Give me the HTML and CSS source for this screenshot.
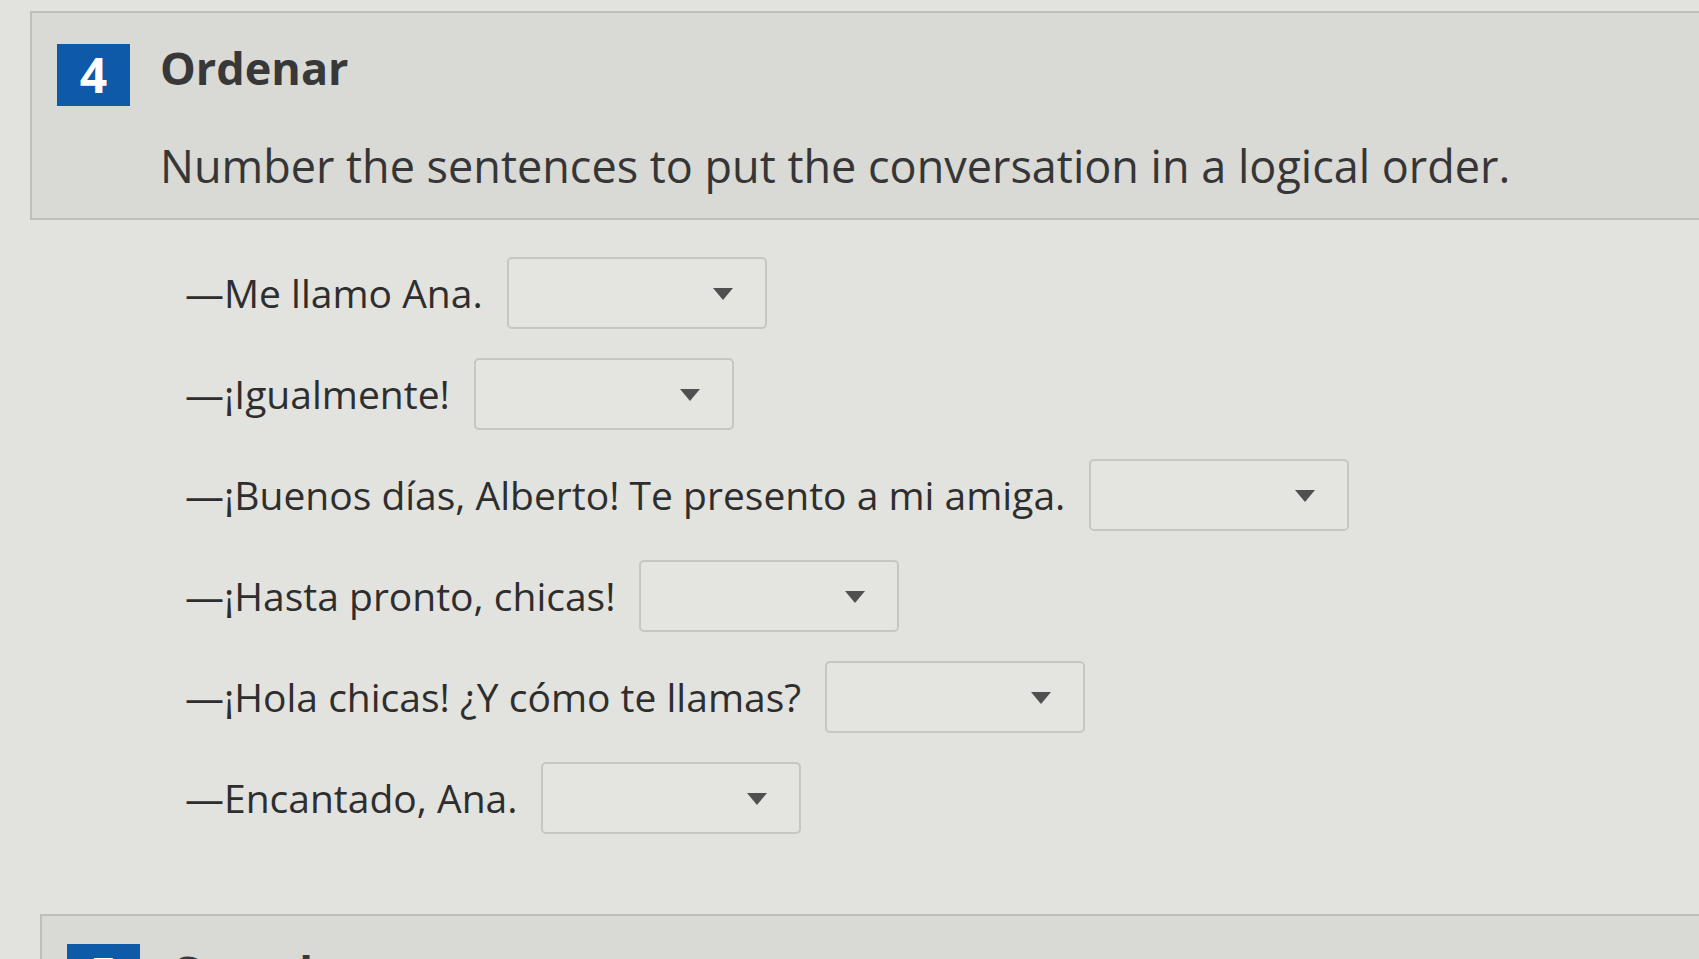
FILE: index.html
```html
<!DOCTYPE html>
<html lang="es">
<head>
<meta charset="utf-8">
<title>Ordenar</title>
<link rel="stylesheet" href="styles.css">
</head>
<body>
<div class="page">
  <section class="activity">
    <header class="activity-head">
      <div class="badge">4</div>
      <div class="head-text">
        <h1 class="title">Ordenar</h1>
        <p class="instructions">Number the sentences to put the conversation in a logical order.</p>
      </div>
    </header>
    <div class="items">
      <div class="row"><span class="line">—Me llamo Ana.</span><div class="select"><span class="caret"></span></div></div>
      <div class="row"><span class="line">—¡Igualmente!</span><div class="select"><span class="caret"></span></div></div>
      <div class="row"><span class="line">—¡Buenos días, Alberto! Te presento a mi amiga.</span><div class="select"><span class="caret"></span></div></div>
      <div class="row"><span class="line">—¡Hasta pronto, chicas!</span><div class="select"><span class="caret"></span></div></div>
      <div class="row"><span class="line">—¡Hola chicas! ¿Y cómo te llamas?</span><div class="select"><span class="caret"></span></div></div>
      <div class="row"><span class="line">—Encantado, Ana.</span><div class="select"><span class="caret"></span></div></div>
    </div>
  </section>
  <section class="activity next">
    <header class="activity-head next-head">
      <div class="badge">5</div>
      <div class="head-text">
        <h1 class="title">Completar</h1>
      </div>
    </header>
  </section>
</div>
</body>
</html>
```

FILE: styles.css
```css
html, body {
  margin: 0;
  padding: 0;
}
body {
  background: #e2e2de;
  font-family: "Open Sans", "Noto Sans", sans-serif;
  color: #333;
  overflow: hidden;
  width: 1699px;
  height: 959px;
}
.page {
  padding: 11px 0 0 30px;
}
.activity-head {
  display: flex;
  align-items: flex-start;
  gap: 30px;
  background: #d9d9d6;
  border: 2px solid #bebebb;
  border-right: none;
  padding: 25px 0 24px 25px;
  margin-right: -10px;
}
.badge {
  width: 73px;
  height: 62px;
  margin-top: 6px;
  background: #0e5aa8;
  color: #fff;
  font-weight: 700;
  font-size: 48px;
  line-height: 62px;
  text-align: center;
  flex: none;
}
.head-text {
  display: flex;
  flex-direction: column;
}
.title {
  margin: 0;
  font-size: 45px;
  line-height: 60px;
  font-weight: 700;
  color: #383838;
}
.instructions {
  margin: 40px 0 0 0;
  font-size: 45px;
  line-height: 56px;
  color: #363636;
}
.items {
  padding: 37px 0 0 155px;
  display: flex;
  flex-direction: column;
  gap: 29px;
}
.row {
  display: flex;
  align-items: center;
  height: 72px;
  gap: 24px;
}
.line {
  font-size: 39px;
  line-height: 50px;
  color: #2e2e2e;
  white-space: nowrap;
}
.select {
  width: 260px;
  height: 72px;
  box-sizing: border-box;
  border: 2px solid #c6c6c2;
  border-radius: 5px;
  background: #e4e4e0;
  position: relative;
  flex: none;
}
.caret {
  position: absolute;
  right: 32px;
  top: 29px;
  width: 0;
  height: 0;
  border-left: 10px solid transparent;
  border-right: 10px solid transparent;
  border-top: 12px solid #505050;
}
.next {
  margin-top: 80px;
  margin-left: 10px;
}
.next-head {
  padding-top: 26px;
}
.next-head .badge {
  margin-top: 2px;
}
```
